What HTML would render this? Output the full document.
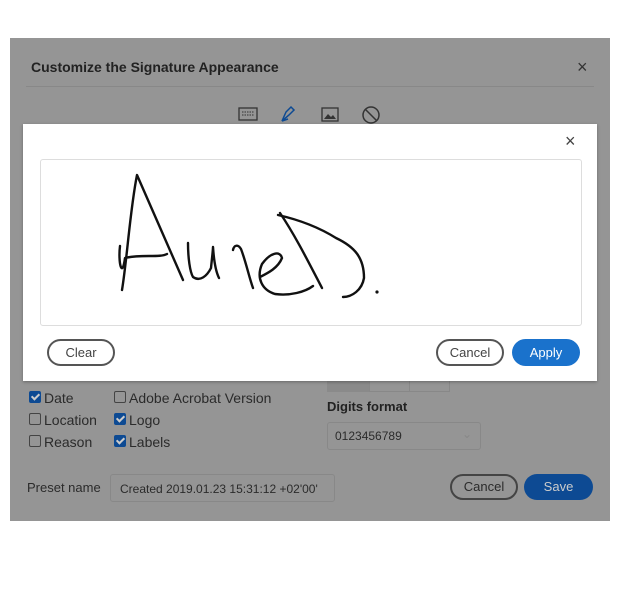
<!DOCTYPE html>
<html><head><style>
*{margin:0;padding:0;box-sizing:border-box}
body{width:620px;height:589px;background:#fff;position:relative;overflow:hidden;font-family:"Liberation Sans",sans-serif}
.a{position:absolute}
#bg{left:10px;top:38px;width:600px;height:483px;background:#959595}
.t{color:#222;font-size:14px;font-weight:bold}
.lbl{font-size:14px;color:#2b2b2b}
.cb{position:absolute;width:12px;height:12px;border:1.5px solid #444;border-radius:2px;background:#959595}
.cb.on{background:#0d4a93;border-color:#0d4a93}
.cb.on:after{content:"";position:absolute;left:3px;top:0px;width:3px;height:6px;border:solid #ccc;border-width:0 2px 2px 0;transform:rotate(45deg)}
.btn{position:absolute;border-radius:14px;font-size:13px;text-align:center}
</style></head><body>
<div id="bg" class="a"></div>
<div class="a t" style="left:31px;top:59px;font-size:14px">Customize the Signature Appearance</div>
<div class="a" style="left:577px;top:57px;font-size:18px;color:#333">×</div>
<div class="a" style="left:26px;top:86px;width:568px;height:1px;background:#888"></div>
<svg class="a" style="left:236px;top:103px" width="150" height="24">
<rect x="3" y="5" width="18" height="12" fill="none" stroke="#333" stroke-width="1.3"/><path d="M6 9h12M6 12h12" stroke="#333" stroke-dasharray="1.5 1"/>
<path d="M46 18l4-9 5-5 3 3-5 5zM46 18l6-2" fill="none" stroke="#0d4a93" stroke-width="1.5"/>
<rect x="86" y="5" width="16" height="13" fill="none" stroke="#333" stroke-width="1.3"/><path d="M88 16l4-5 3 3 2-2 3 4z" fill="#333"/>
<circle cx="135" cy="12" r="8" fill="none" stroke="#333" stroke-width="1.5"/><path d="M129 6l12 12" stroke="#333" stroke-width="1.5"/>
</svg>
<div class="a" style="left:327px;top:372px;width:123px;height:20px;border:1px solid #888;background:#959595"></div>
<div class="a" style="left:327px;top:372px;width:42px;height:20px;background:#8a8a8a"></div>
<div class="a" style="left:409px;top:372px;width:1px;height:20px;background:#888"></div>
<div class="a" style="left:369px;top:372px;width:1px;height:20px;background:#888"></div>
<div class="cb on" style="left:29px;top:391px"></div><div class="a lbl" style="left:44px;top:390px">Date</div>
<div class="cb" style="left:29px;top:413px"></div><div class="a lbl" style="left:44px;top:412px">Location</div>
<div class="cb" style="left:29px;top:435px"></div><div class="a lbl" style="left:44px;top:434px">Reason</div>
<div class="cb" style="left:114px;top:391px"></div><div class="a lbl" style="left:129px;top:390px">Adobe Acrobat Version</div>
<div class="cb on" style="left:114px;top:413px"></div><div class="a lbl" style="left:129px;top:412px">Logo</div>
<div class="cb on" style="left:114px;top:435px"></div><div class="a lbl" style="left:129px;top:434px">Labels</div>
<div class="a t" style="left:327px;top:399px;font-size:13px">Digits format</div>
<div class="a" style="left:327px;top:422px;width:154px;height:28px;border:1px solid #888;border-radius:3px;font-size:12px;color:#2b2b2b;padding:6px 7px">0123456789<span style="position:absolute;right:8px;top:4px;color:#888">⌄</span></div>
<div class="a lbl" style="left:27px;top:480px;font-size:13px">Preset name</div>
<div class="a" style="left:110px;top:474px;width:225px;height:28px;border:1px solid #888;border-radius:3px;font-size:12px;color:#2b2b2b;padding:7px 9px">Created 2019.01.23 15:31:12 +02'00'</div>
<div class="btn" style="left:450px;top:474px;width:68px;height:26px;border:2px solid #444;color:#2b2b2b;line-height:22px">Cancel</div>
<div class="btn" style="left:524px;top:474px;width:69px;height:26px;background:#0d4a93;color:#ccc;line-height:26px">Save</div>

<div class="a" style="left:23px;top:124px;width:574px;height:257px;background:#fff;box-shadow:0 1px 3px rgba(0,0,0,.3)"></div>
<div class="a" style="left:565px;top:131px;font-size:18px;color:#444">×</div>
<div class="a" style="left:40px;top:159px;width:542px;height:167px;border:1px solid #ddd;border-radius:3px"></div>
<svg class="a" style="left:0;top:0" width="620" height="589">
<g fill="none" stroke="#111" stroke-width="2.4" stroke-linecap="round" stroke-linejoin="round">
<path d="M122 290C127 260 130 210 137 175C150 205 170 250 183 280"/>
<path d="M120 246C118 262 122 280 125 258C140 254 160 258 167 254"/>
<path d="M188 243C188 258 190 272 193 277C200 282 207 276 211 268C212 258 213 250 213 247C214 262 216 272 219 278"/>
<path d="M233 250C234 245 238 244 241 249C246 262 249 277 253 288"/>
<path d="M260 277C268 273 278 268 282 258C280 250 270 253 262 264C256 278 262 290 275 294C290 296 305 292 313 286"/>
<path d="M280 213C295 235 310 265 322 288"/>
<path d="M278 215C300 220 320 228 336 238C355 247 364 258 364 278C362 290 352 297 343 297"/>
</g>
<circle cx="377" cy="292" r="1.6" fill="#111"/>
</svg>
<div class="btn" style="left:47px;top:339px;width:68px;height:27px;border:2px solid #555;color:#444;line-height:23px">Clear</div>
<div class="btn" style="left:436px;top:339px;width:68px;height:27px;border:2px solid #555;color:#444;line-height:23px">Cancel</div>
<div class="btn" style="left:512px;top:339px;width:68px;height:27px;background:#1a72cc;color:#fff;line-height:27px">Apply</div>
</body></html>
